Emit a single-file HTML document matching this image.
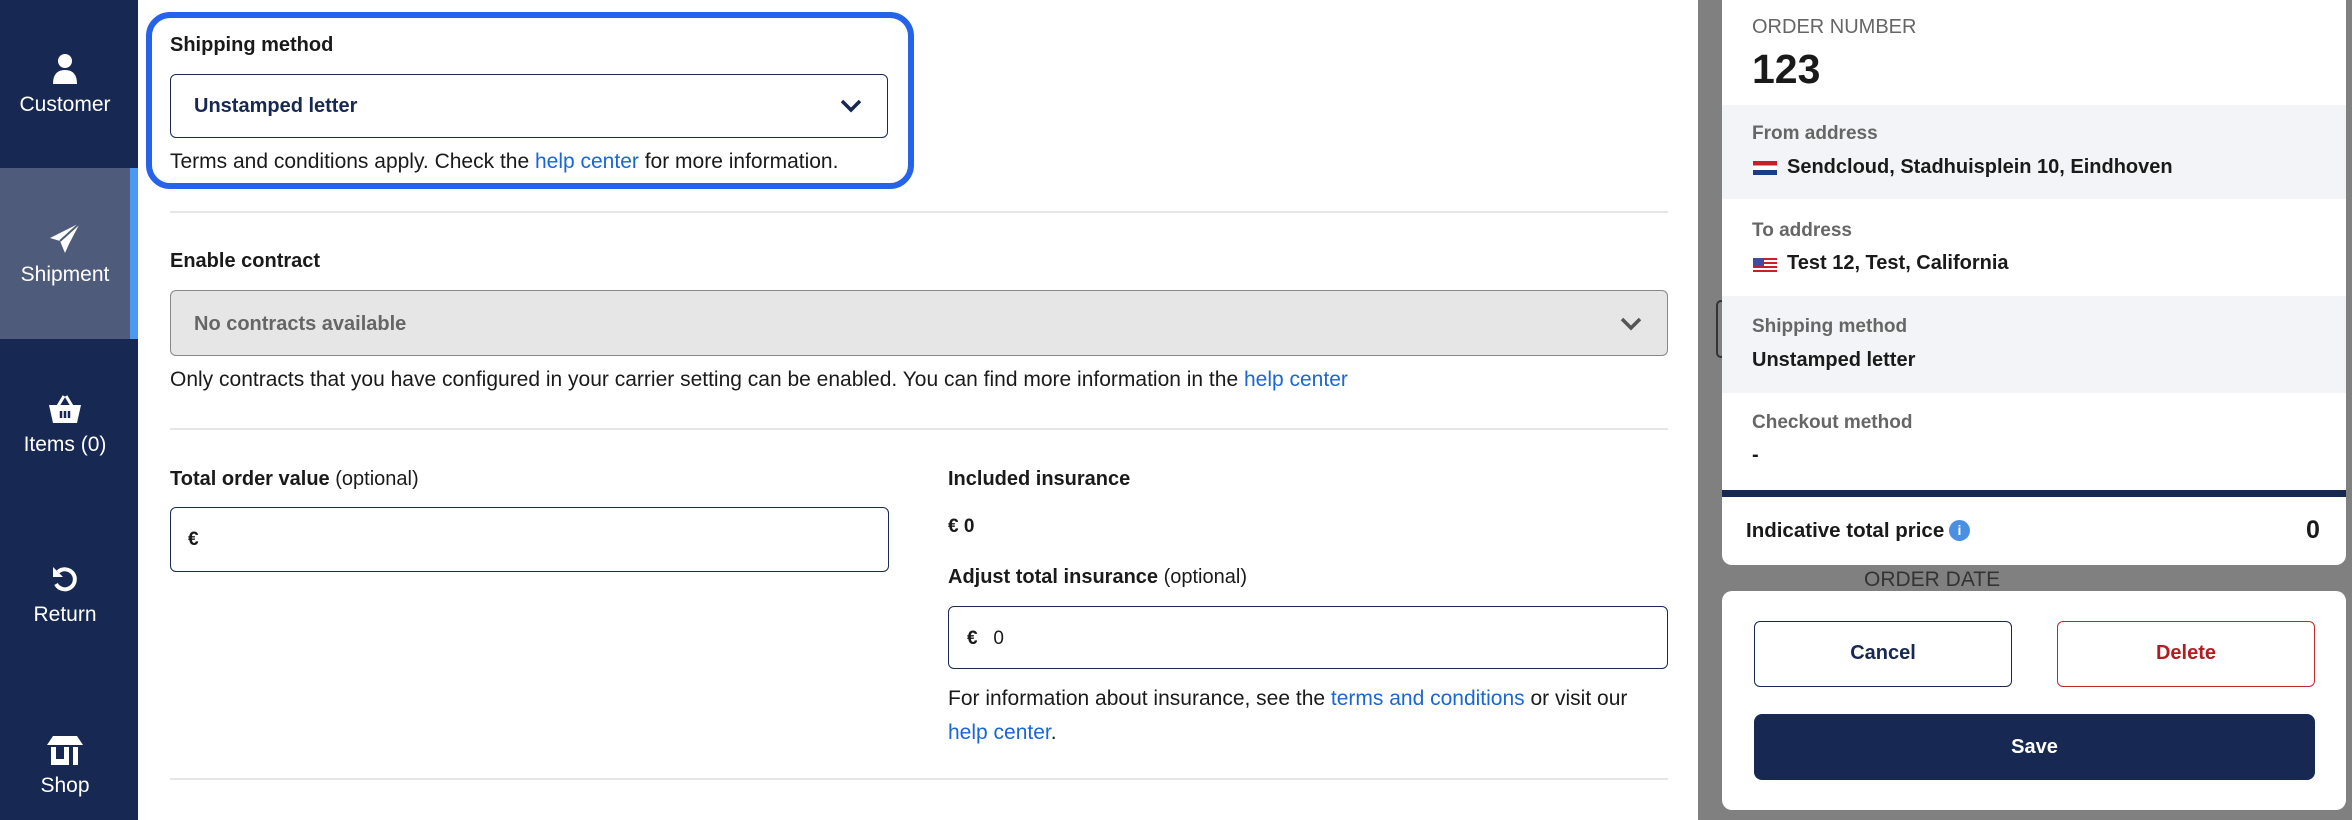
<!DOCTYPE html>
<html><head><meta charset="utf-8"><style>
*{box-sizing:border-box;margin:0;padding:0}
body{width:2352px;height:820px;overflow:hidden;position:relative;background:#fff;font-family:"Liberation Sans",sans-serif;color:#1a1a1a}
.abs{position:absolute}
#side{left:0;top:0;width:138px;height:820px;background:#172852}
.nav{position:absolute;left:0;width:130px;color:#fff;text-align:center;font-size:21px}
.nav svg{display:block;margin:0 auto}
.lbl{font-weight:bold;font-size:20px;line-height:24px}
.help{font-size:21px;line-height:24px}
a{color:#1a66d6;text-decoration:none}
.sel{border:1.5px solid #1a2a52;border-radius:6px;background:#fff}
.div{height:2px;background:#e6e6e6;left:170px;width:1498px}
.pl{font-size:19px;color:#666;font-weight:bold;left:1752px}
.pv{font-size:20px;color:#1a1a1a;font-weight:bold;left:1752px}
</style></head><body>
<div id="side" class="abs">
  <div class="abs" style="left:0;top:168px;width:138px;height:171px;background:#4f5b7a"></div>
  <div class="abs" style="left:130px;top:168px;width:8px;height:171px;background:#4a9af5"></div>
  <div class="nav" style="top:52px"><svg width="30" height="32" viewBox="0 0 30 32"><circle cx="15" cy="9" r="7" fill="#fff"/><path d="M3 32 Q3 18 15 18 Q27 18 27 32Z" fill="#fff"/></svg><div style="margin-top:9px">Customer</div></div>
  <div class="nav" style="top:222px"><svg width="34" height="32" viewBox="0 0 34 32"><path d="M32 1 L2 16 L12 19 L17 31 L21 22 Z" fill="#fff"/><path d="M32 1 L12 19" stroke="#4f5b7a" stroke-width="2"/></svg><div style="margin-top:9px">Shipment</div></div>
  <div class="nav" style="top:394px"><svg width="34" height="30" viewBox="0 0 34 30"><path d="M10 12 L16 2 M24 12 L18 2" stroke="#fff" stroke-width="3" fill="none"/><path d="M1 11 H33 L29 29 H5Z" fill="#fff"/><path d="M13 17v7M17 17v7M21 17v7" stroke="#172852" stroke-width="2.5"/></svg><div style="margin-top:9px">Items (0)</div></div>
  <div class="nav" style="top:564px"><svg width="30" height="30" viewBox="0 0 30 30"><path d="M8 8 A10 10 0 1 1 6 20" stroke="#fff" stroke-width="4" fill="none"/><path d="M3 3 V13 H13Z" fill="#fff"/></svg><div style="margin-top:9px">Return</div></div>
  <div class="nav" style="top:735px"><svg width="36" height="32" viewBox="0 0 36 32"><path d="M6 1 H30 L36 10 H0Z" fill="#fff"/><path d="M4 12 V30 H22 V12 H17 V24 H9 V12Z M26 12 H31 V30 H26Z" fill="#fff"/></svg><div style="margin-top:7px">Shop</div></div>
</div>

<div class="abs" style="left:146px;top:12px;width:768px;height:177px;border:6px solid #2563eb;border-radius:24px"></div>
<div class="abs lbl" style="left:170px;top:33px">Shipping method</div>
<div class="abs sel" style="left:170px;top:74px;width:718px;height:64px"></div>
<div class="abs" style="left:194px;top:95px;font-size:20px;font-weight:bold;color:#172852">Unstamped letter</div>
<svg class="abs" style="left:840px;top:99px" width="22" height="14" viewBox="0 0 22 14"><path d="M2 2 L11 11 L20 2" stroke="#172852" stroke-width="3.5" fill="none"/></svg>
<div class="abs help" style="left:170px;top:150px">Terms and conditions apply. Check the <a>help center</a> for more information.</div>
<div class="abs div" style="top:211px"></div>

<div class="abs lbl" style="left:170px;top:249px">Enable contract</div>
<div class="abs" style="left:170px;top:290px;width:1498px;height:66px;background:#e6e6e6;border:1.5px solid #888;border-radius:6px"></div>
<div class="abs" style="left:194px;top:313px;font-size:20px;font-weight:bold;color:#666">No contracts available</div>
<svg class="abs" style="left:1620px;top:317px" width="22" height="14" viewBox="0 0 22 14"><path d="M2 2 L11 11 L20 2" stroke="#555" stroke-width="3.5" fill="none"/></svg>
<div class="abs help" style="left:170px;top:368px">Only contracts that you have configured in your carrier setting can be enabled. You can find more information in the <a>help center</a></div>
<div class="abs div" style="top:428px"></div>

<div class="abs lbl" style="left:170px;top:467px">Total order value <span style="font-weight:normal">(optional)</span></div>
<div class="abs sel" style="left:170px;top:507px;width:719px;height:65px"></div>
<div class="abs" style="left:188px;top:529px;font-size:19px;font-weight:bold">€</div>
<div class="abs lbl" style="left:948px;top:467px">Included insurance</div>
<div class="abs" style="left:948px;top:516px;font-size:19px;font-weight:bold">€ 0</div>
<div class="abs lbl" style="left:948px;top:565px">Adjust total insurance <span style="font-weight:normal">(optional)</span></div>
<div class="abs sel" style="left:948px;top:606px;width:720px;height:63px"></div>
<div class="abs" style="left:967px;top:628px;font-size:19px;font-weight:bold">€ &nbsp;&nbsp;<span style="font-weight:normal">0</span></div>
<div class="abs help" style="left:948px;top:682px;width:720px;line-height:34px">For information about insurance, see the <a>terms and conditions</a> or visit our<br><a>help center</a>.</div>
<div class="abs div" style="top:778px"></div>

<div class="abs" style="left:1698px;top:0;width:654px;height:820px;background:#808080"></div>
<div class="abs" style="left:1716px;top:300px;width:10px;height:58px;border:2px solid #333;border-radius:6px"></div>
<div class="abs" style="left:1864px;top:568px;font-size:21px;color:#333">ORDER DATE</div>

<div class="abs" style="left:1722px;top:0;width:624px;height:565px;background:#fff;border-radius:0 0 10px 10px;overflow:hidden">
  <div class="abs" style="left:0;top:105px;width:624px;height:94px;background:#f3f4f8"></div>
  <div class="abs" style="left:0;top:296px;width:624px;height:97px;background:#f3f4f8"></div>
  <div class="abs" style="left:0;top:490px;width:624px;height:7px;background:#172852"></div>
</div>
<div class="abs" style="left:1752px;top:16px;font-size:20px;color:#666">ORDER NUMBER</div>
<div class="abs" style="left:1752px;top:46px;font-size:41px;font-weight:bold;color:#1a1a1a">123</div>
<div class="abs pl" style="top:123px">From address</div>
<div class="abs" style="left:1753px;top:161px;width:24px;height:14px;background:linear-gradient(#c8202a 33%,#fff 33%,#fff 66%,#1a3a8a 66%)"></div>
<div class="abs pv" style="left:1787px;top:156px">Sendcloud, Stadhuisplein 10, Eindhoven</div>
<div class="abs pl" style="top:220px">To address</div>
<div class="abs" style="left:1753px;top:258px;width:24px;height:14px;background:repeating-linear-gradient(#c8202a 0 2px,#fff 2px 4px)"><div style="width:11px;height:8px;background:#3c4ea0"></div></div>
<div class="abs pv" style="left:1787px;top:252px">Test 12, Test, California</div>
<div class="abs pl" style="top:316px">Shipping method</div>
<div class="abs pv" style="top:349px">Unstamped letter</div>
<div class="abs pl" style="top:412px">Checkout method</div>
<div class="abs pv" style="top:444px">-</div>
<div class="abs" style="left:1746px;top:519px;font-size:20.5px;font-weight:bold">Indicative total price</div>
<div class="abs" style="left:1949px;top:520px;width:21px;height:21px;border-radius:50%;background:#4a90e2;color:#fff;font-size:14px;font-weight:bold;text-align:center;line-height:21px">i</div>
<div class="abs" style="left:2306px;top:516px;font-size:25px;font-weight:bold">0</div>

<div class="abs" style="left:1722px;top:591px;width:624px;height:219px;background:#fff;border-radius:10px"></div>
<div class="abs" style="left:1754px;top:621px;width:258px;height:66px;border:1.5px solid #172852;border-radius:6px;text-align:center;line-height:63px;font-size:20px;font-weight:bold;color:#172852">Cancel</div>
<div class="abs" style="left:2057px;top:621px;width:258px;height:66px;border:1.5px solid #c0272d;border-radius:6px;text-align:center;line-height:63px;font-size:20px;font-weight:bold;color:#b01e24">Delete</div>
<div class="abs" style="left:1754px;top:714px;width:561px;height:66px;background:#172852;border-radius:8px;text-align:center;line-height:66px;font-size:20px;font-weight:bold;color:#fff">Save</div>
</body></html>
